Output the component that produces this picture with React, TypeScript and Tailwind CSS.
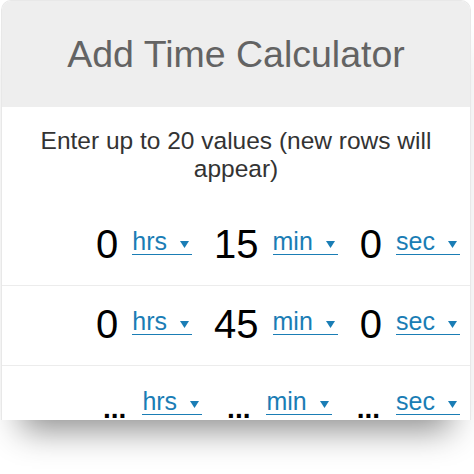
import React from "react";

type Part = { value: string; unit: string; empty?: boolean };

const rows: Part[][] = [
  [
    { value: "0", unit: "hrs" },
    { value: "15", unit: "min" },
    { value: "0", unit: "sec" },
  ],
  [
    { value: "0", unit: "hrs" },
    { value: "45", unit: "min" },
    { value: "0", unit: "sec" },
  ],
  [
    { value: "...", unit: "hrs", empty: true },
    { value: "...", unit: "min", empty: true },
    { value: "...", unit: "sec", empty: true },
  ],
];

function UnitLink({ label, wide }: { label: string; wide?: boolean }) {
  return (
    <span
      className={`${wide ? "ml-[16px]" : "ml-[14px]"} inline-block align-[8px] border-b-[1.5px] border-[#1a7db5] pr-[3px] text-[25px] leading-none text-[#1a7db5]`}
    >
      {label}
      <svg
        width="9"
        height="7"
        viewBox="0 0 9 7"
        className="ml-[13px] inline-block align-[2px]"
      >
        <path d="M0 0 H9 L4.5 7 Z" fill="#1a7db5" />
      </svg>
    </span>
  );
}

function TimeRow({ parts }: { parts: Part[] }) {
  return (
    <div className="h-[80px] border-b border-[#ececec] pr-[10px] pt-[14px] text-right text-[40px] leading-[48px] text-black whitespace-nowrap">
      {parts.map((p, i) => (
        <span
          key={i}
          className={i === 0 ? "" : p.empty ? "ml-[25px]" : "ml-[22px]"}
        >
          {p.empty ? (
            <span className="text-[28px] font-bold">{p.value}</span>
          ) : (
            <span>{p.value}</span>
          )}
          <UnitLink label={p.unit} wide={p.empty} />
        </span>
      ))}
    </div>
  );
}

export default function App() {
  return (
    <div
      className="h-[474px] w-[474px] overflow-hidden bg-white"
      style={{ fontFamily: '"Liberation Sans", Arial, sans-serif' }}
    >
      <div className="ml-px h-[420px] w-[470px] overflow-hidden rounded-t-[10px] border-x border-t border-[#e8e8e8] bg-white shadow-[0_30px_32px_-20px_rgba(0,0,0,0.45)]">
        <div className="flex h-[106px] items-center justify-center bg-[#eeeeee] text-[37.5px] text-[#636363]">
          Add Time Calculator
        </div>
        <div className="px-[24px] pb-[23px] pt-[20px] text-center text-[24.5px] leading-[28px] text-[#333333]">
          Enter up to 20 values (new rows will appear)
        </div>
        {rows.map((r, i) => (
          <TimeRow key={i} parts={r} />
        ))}
      </div>
    </div>
  );
}
